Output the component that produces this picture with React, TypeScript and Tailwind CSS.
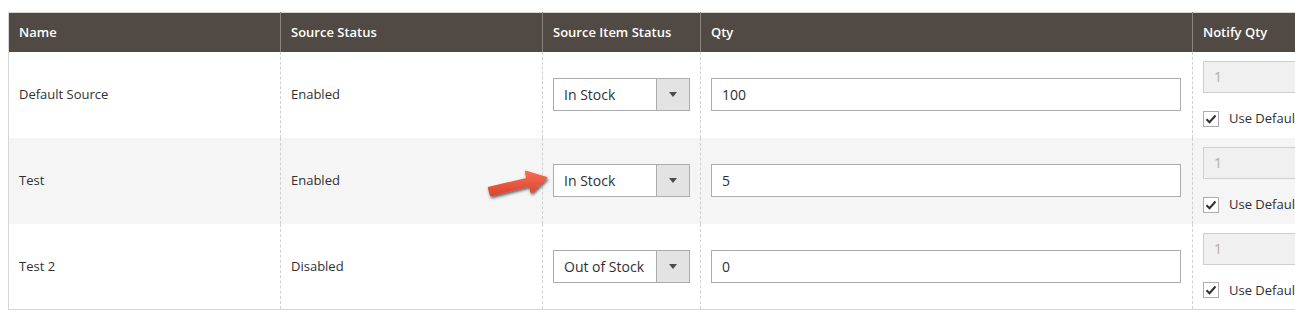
import React from 'react';

interface SourceRow {
  name: string;
  status: string;
  itemStatus: string;
  qty: string;
  notifyQty: string;
}

const rows: SourceRow[] = [
  { name: 'Default Source', status: 'Enabled', itemStatus: 'In Stock', qty: '100', notifyQty: '1' },
  { name: 'Test', status: 'Enabled', itemStatus: 'In Stock', qty: '5', notifyQty: '1' },
  { name: 'Test 2', status: 'Disabled', itemStatus: 'Out of Stock', qty: '0', notifyQty: '1' },
];

const StatusSelect: React.FC<{ value: string }> = ({ value }) => (
  <div className="flex h-[33px] w-[137px] border border-[#adadad] bg-white">
    <div className="flex-1 flex items-center pl-[10px] text-[14px] text-[#303030] whitespace-nowrap">{value}</div>
    <div className="w-[33px] flex items-center justify-center bg-[#e3e3e3] border-l border-[#adadad]">
      <div className="w-0 h-0 border-l-[4px] border-r-[4px] border-t-[5px] border-l-transparent border-r-transparent border-t-[#514943]" />
    </div>
  </div>
);

const Arrow: React.FC = () => (
  // red pointer arrow overlaid on the screenshot
  <svg className="absolute left-[484px] top-[167px]" width="72" height="38" viewBox="0 0 72 38">
    <defs>
      <filter id="shadow" x="-20%" y="-40%" width="140%" height="180%">
        <feDropShadow dx="1" dy="2" stdDeviation="1.4" floodColor="#000" floodOpacity="0.6" />
      </filter>
      <linearGradient id="red" x1="0" y1="0" x2="0" y2="1">
        <stop offset="0" stopColor="#f56c52" />
        <stop offset="1" stopColor="#dc4430" />
      </linearGradient>
    </defs>
    <polygon
      points="5,21 43.5,11.8 42,4.8 62,11 47.5,25 46,18.2 7,28"
      fill="url(#red)"
      stroke="url(#red)"
      strokeWidth="2.4"
      strokeLinejoin="round"
      filter="url(#shadow)"
    />
  </svg>
);

const headCell = 'h-[39px] px-[10px] text-left align-middle text-[13px] font-semibold text-white border-l border-[#8a8380] first:border-l-0';
const bodyCell = 'px-[10px] align-middle text-[13px] text-[#303030] border-l border-dashed border-[#d0d0d0] first:border-l-0';

export default function App() {
  return (
    <div className="relative w-[1295px] h-[325px] overflow-hidden bg-white font-['Open_Sans',sans-serif]">
      <div className="pt-3 pl-2">
        <table className="table-fixed border-collapse w-[1460px] border border-[#d6d6d6]">
          <colgroup>
            <col className="w-[272px]" />
            <col className="w-[262px]" />
            <col className="w-[158px]" />
            <col className="w-[492px]" />
            <col className="w-[276px]" />
          </colgroup>
          <thead>
            <tr className="bg-[#514943]">
              <th className={headCell}>Name</th>
              <th className={headCell}>Source Status</th>
              <th className={headCell}>Source Item Status</th>
              <th className={headCell}>Qty</th>
              <th className={headCell}>Notify Qty</th>
            </tr>
          </thead>
          <tbody>
            {rows.map((row, i) => (
              <tr key={row.name} className={`h-[86px] ${i === 1 ? 'bg-[#f5f5f5]' : 'bg-white'}`}>
                <td className={bodyCell}>{row.name}</td>
                <td className={bodyCell}>{row.status}</td>
                <td className={`${bodyCell} px-[8px]`}>
                  <StatusSelect value={row.itemStatus} />
                </td>
                <td className={`${bodyCell} px-[9px]`}>
                  <div className="h-[33px] w-[470px] border border-[#adadad] bg-white flex items-center pl-[10px] text-[14px] text-[#303030]">
                    {row.qty}
                  </div>
                </td>
                <td className={`${bodyCell} px-[8px]`}>
                  <div className="flex flex-col gap-[16px]">
                    <div className="h-[32px] w-[120px] border border-[#cfcfcf] bg-[#f0f0f0] flex items-center pl-[10px] text-[14px] text-[#b9ab9c]">
                      {row.notifyQty}
                    </div>
                    <div className="flex items-center gap-[10px]">
                      <div className="w-[16px] h-[16px] border border-[#adadad] bg-white flex items-center justify-center">
                        <svg width="12" height="10" viewBox="0 0 12 10">
                          <path d="M1.5 5.2 L4.5 8.2 L10.5 1.5" fill="none" stroke="#303030" strokeWidth="2" />
                        </svg>
                      </div>
                      <span className="text-[13px] text-[#303030] whitespace-nowrap">Use Default</span>
                    </div>
                  </div>
                </td>
              </tr>
            ))}
          </tbody>
        </table>
      </div>
      <Arrow />
    </div>
  );
}
